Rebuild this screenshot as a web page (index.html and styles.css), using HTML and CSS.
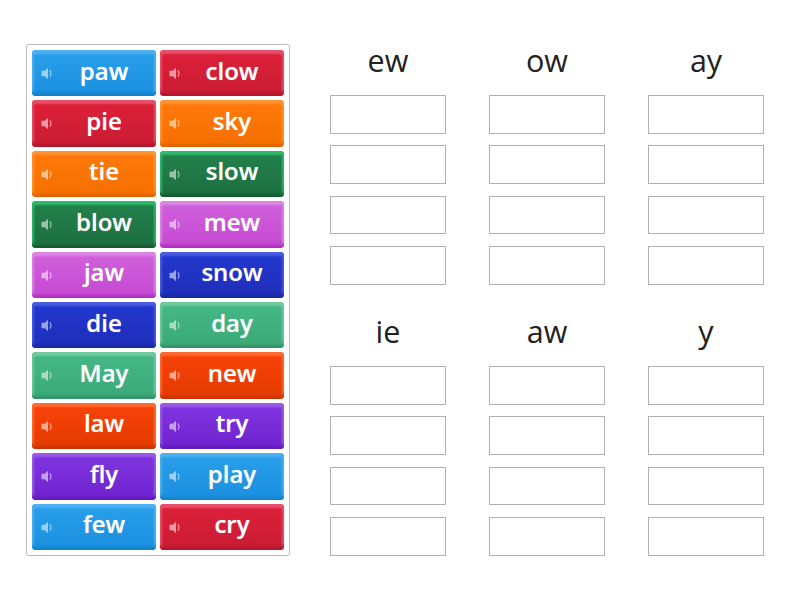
FILE: index.html
```html
<!DOCTYPE html>
<html lang="en">
<head>
    <meta charset="UTF-8">
    <title>Group sort</title>
    <link rel="stylesheet" href="styles.css">
</head>
<body>
    <svg class="defs" width="0" height="0">
        <symbol id="speaker" viewBox="0 0 13 13">
            <path d="M0.5 3.800h3.300l3.200-3v11.400l-3.200-3h-3.300z" fill="#fff"/>
            <path d="M8.800 3.300q2.400 3.200 0 6.400" fill="none" stroke="#fff" stroke-width="1.200"/>
        </symbol>
    </svg>

    <div class="activity">
        <div class="tray">
            <div class="tile blue"><svg class="speaker"><use href="#speaker"/></svg><span>paw</span></div>
            <div class="tile red"><svg class="speaker"><use href="#speaker"/></svg><span>clow</span></div>
            <div class="tile red"><svg class="speaker"><use href="#speaker"/></svg><span>pie</span></div>
            <div class="tile orange"><svg class="speaker"><use href="#speaker"/></svg><span>sky</span></div>
            <div class="tile orange"><svg class="speaker"><use href="#speaker"/></svg><span>tie</span></div>
            <div class="tile green"><svg class="speaker"><use href="#speaker"/></svg><span>slow</span></div>
            <div class="tile green"><svg class="speaker"><use href="#speaker"/></svg><span>blow</span></div>
            <div class="tile pink"><svg class="speaker"><use href="#speaker"/></svg><span>mew</span></div>
            <div class="tile pink"><svg class="speaker"><use href="#speaker"/></svg><span>jaw</span></div>
            <div class="tile indigo"><svg class="speaker"><use href="#speaker"/></svg><span>snow</span></div>
            <div class="tile indigo"><svg class="speaker"><use href="#speaker"/></svg><span>die</span></div>
            <div class="tile sea"><svg class="speaker"><use href="#speaker"/></svg><span>day</span></div>
            <div class="tile sea"><svg class="speaker"><use href="#speaker"/></svg><span>May</span></div>
            <div class="tile flame"><svg class="speaker"><use href="#speaker"/></svg><span>new</span></div>
            <div class="tile flame"><svg class="speaker"><use href="#speaker"/></svg><span>law</span></div>
            <div class="tile violet"><svg class="speaker"><use href="#speaker"/></svg><span>try</span></div>
            <div class="tile violet"><svg class="speaker"><use href="#speaker"/></svg><span>fly</span></div>
            <div class="tile blue"><svg class="speaker"><use href="#speaker"/></svg><span>play</span></div>
            <div class="tile blue"><svg class="speaker"><use href="#speaker"/></svg><span>few</span></div>
            <div class="tile red"><svg class="speaker"><use href="#speaker"/></svg><span>cry</span></div>
        </div>

        <div class="groups">
            <div class="group"><h2>ew</h2><div class="slot"></div><div class="slot"></div><div class="slot"></div><div class="slot"></div></div>
            <div class="group"><h2>ow</h2><div class="slot"></div><div class="slot"></div><div class="slot"></div><div class="slot"></div></div>
            <div class="group"><h2>ay</h2><div class="slot"></div><div class="slot"></div><div class="slot"></div><div class="slot"></div></div>
            <div class="group"><h2>ie</h2><div class="slot"></div><div class="slot"></div><div class="slot"></div><div class="slot"></div></div>
            <div class="group"><h2>aw</h2><div class="slot"></div><div class="slot"></div><div class="slot"></div><div class="slot"></div></div>
            <div class="group"><h2>y</h2><div class="slot"></div><div class="slot"></div><div class="slot"></div><div class="slot"></div></div>
        </div>
    </div>
</body>
</html>
```

FILE: styles.css
```css
body {
    margin: 0;
    background: #fff;
    font-family: "Open Sans", sans-serif;
    overflow: hidden;
}

.defs {
    display: block;
}

.activity {
    display: flex;
    padding: 44px 36px 0 26px;
}

.tray {
    box-sizing: border-box;
    width: 264px;
    height: 512px;
    padding: 5px;
    display: grid;
    grid-template-columns: 124px 124px;
    grid-auto-rows: 46.4px;
    gap: 4px;
    border: 1px solid #bbb;
    border-radius: 3px;
}

/* bevel: lighter top and sides, darker lip along the bottom */
.tile {
    display: flex;
    align-items: center;
    justify-content: center;
    padding-left: 20px;
    padding-bottom: 6px;
    box-sizing: border-box;
    position: relative;
    border-radius: 4px;
    color: #fff;
    font-size: 24px;
    font-weight: 600;
    text-shadow: 0 0 1px rgba(255, 255, 255, 0.5);
    box-shadow: inset 0 -5px 3px -2px var(--lip), inset 0 5px 2px -1px var(--edge), inset 4px 0 2px -2px var(--edge), inset -4px 0 2px -2px var(--edge);
}

.speaker {
    position: absolute;
    left: 9px;
    top: 17px;
    width: 13px;
    height: 13px;
    opacity: 0.55;
}

.blue { --edge: #4db0f0; --lip: #1482cc; background: linear-gradient(#2a9fe9, #1a8fdf); }
.red { --edge: #e8506a; --lip: #b3162c; background: linear-gradient(#de2039, #c81c34); }
.orange { --edge: #ff9433; --lip: #e06400; background: linear-gradient(#ff7a0a, #f56f00); }
.green { --edge: #2dbb69; --lip: #155c34; background: linear-gradient(#23824c, #1c6e3f); }
.pink { --edge: #dc86e4; --lip: #b42ec4; background: linear-gradient(#d062dc, #c548d2); }
.indigo { --edge: #4a5ce0; --lip: #1b28a4; background: linear-gradient(#2238d0, #1f2db8); }
.sea { --edge: #6fcb9f; --lip: #329469; background: linear-gradient(#46b987, #3aa877); }
.flame { --edge: #ff6a33; --lip: #cc3400; background: linear-gradient(#f9430a, #e23a00); }
.violet { --edge: #9a5ce8; --lip: #621cbc; background: linear-gradient(#8036e0, #6e22cf); }

.groups {
    margin-left: 40px;
    flex: 1;
    display: grid;
    grid-template-columns: 116px 116px 116px;
    justify-content: space-between;
    row-gap: 30px;
}

.group {
    display: flex;
    flex-direction: column;
    gap: 11.53px;
}

.group h2 {
    margin: 0;
    height: 39.47px;
    text-align: center;
    font-size: 30.5px;
    font-weight: 400;
    line-height: 32px;
    color: #222;
}

.slot {
    box-sizing: border-box;
    height: 38.8px;
    border: 1px solid #b0b0b0;
    background: #fff;
}
```
